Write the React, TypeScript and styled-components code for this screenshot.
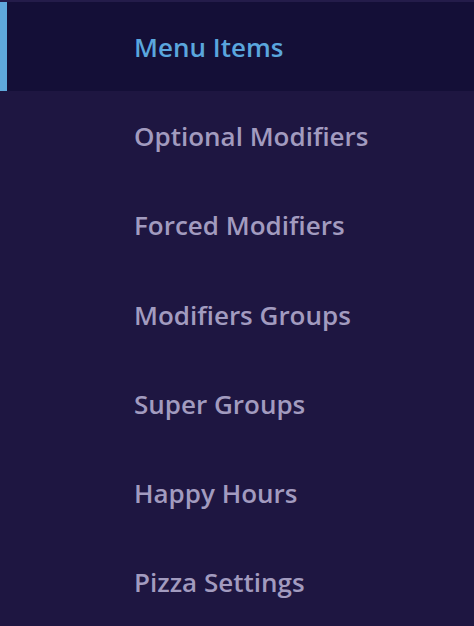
import styled, { createGlobalStyle } from "styled-components";

const GlobalStyle = createGlobalStyle`
  html, body {
    margin: 0;
    padding: 0;
    background: #1e1641;
  }
`;

const items = [
  "Menu Items",
  "Optional Modifiers",
  "Forced Modifiers",
  "Modifiers Groups",
  "Super Groups",
  "Happy Hours",
  "Pizza Settings",
];

const Sidebar = styled.nav`
  width: 474px;
  height: 626px;
  background: #1e1641;
  border-top: 2px solid #241c4a;
  box-sizing: border-box;
  display: flex;
  flex-direction: column;
  font-family: "Open Sans", "Noto Sans", sans-serif;
  overflow: hidden;
`;

const Item = styled.div<{ active?: boolean }>`
  height: 89.3px;
  flex-shrink: 0;
  display: flex;
  align-items: center;
  box-sizing: border-box;
  background: ${({ active }) => (active ? "#140f37" : "transparent")};
  border-left: ${({ active }) => (active ? "7px solid #5fa8dc" : "none")};
  padding-left: ${({ active }) => (active ? "127px" : "134px")};
  color: ${({ active }) => (active ? "#5aa6dd" : "#a29bbf")};
  font-size: 26px;
  font-weight: 600;
  cursor: pointer;
`;

export default function App() {
  return (
    <>
      <GlobalStyle />
      <Sidebar>
        {items.map((label, i) => (
          <Item key={label} active={i === 0}>
            {label}
          </Item>
        ))}
      </Sidebar>
    </>
  );
}
